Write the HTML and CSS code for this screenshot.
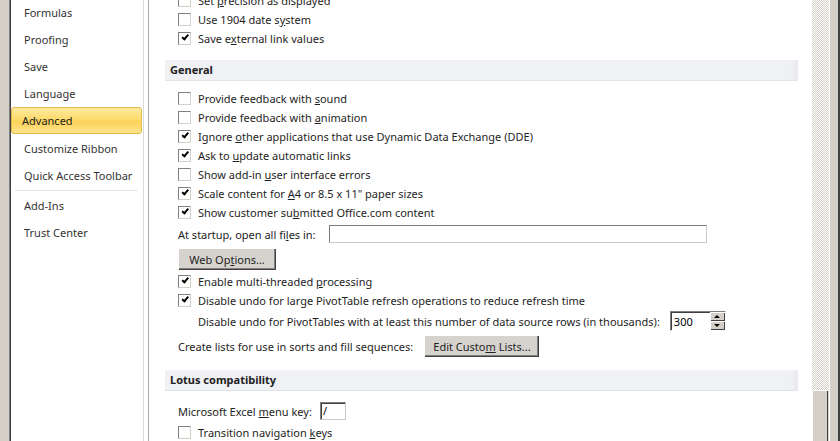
FILE: index.html
```html
<!DOCTYPE html>
<html lang="en">
<head>
    <meta charset="UTF-8">
    <title>Excel Options - Advanced</title>
    <link rel="stylesheet" href="styles.css">
</head>
<body>

<div class="window">
    <div class="frame-left"></div>

    <!-- Category list -->
    <nav class="sidebar">
        <div class="nav-item">Formulas</div>
        <div class="nav-item">Proofing</div>
        <div class="nav-item">Save</div>
        <div class="nav-item">Language</div>
        <div class="nav-item selected">Advanced</div>
        <div class="nav-item">Customize Ribbon</div>
        <div class="nav-item">Quick Access Toolbar</div>
        <div class="nav-sep"></div>
        <div class="nav-item">Add-Ins</div>
        <div class="nav-item">Trust Center</div>
    </nav>

    <div class="gutter"></div>

    <!-- Options pane (scrolled) -->
    <main class="pane">
        <div class="pane-inner">
            <div class="section-body first">
                <div class="row"><span class="cb"></span><span>Set <u>p</u>recision as displayed</span></div>
                <div class="row"><span class="cb"></span><span>Use 1904 date s<u>y</u>stem</span></div>
                <div class="row"><span class="cb on"></span><span>Save e<u>x</u>ternal link values</span></div>
            </div>

            <div class="section-head">General</div>
            <div class="section-body">
                <div class="row"><span class="cb"></span><span>Provide feedback with <u>s</u>ound</span></div>
                <div class="row"><span class="cb"></span><span>Provide feedback with <u>a</u>nimation</span></div>
                <div class="row"><span class="cb on"></span><span>Ignore <u>o</u>ther applications that use Dynamic Data Exchange (DDE)</span></div>
                <div class="row"><span class="cb on"></span><span>Ask to <u>u</u>pdate automatic links</span></div>
                <div class="row"><span class="cb"></span><span>Show add-in <u>u</u>ser interface errors</span></div>
                <div class="row"><span class="cb on"></span><span>Scale content for <u>A</u>4 or 8.5 x 11" paper sizes</span></div>
                <div class="row"><span class="cb on"></span><span>Show customer su<u>b</u>mitted Office.com content</span></div>
                <div class="row field-row">
                    <span>At startup, open all fi<u>l</u>es in:</span>
                    <span class="textbox startup"></span>
                </div>
                <div class="button-row">
                    <button class="btn web">Web Op<u>t</u>ions...</button>
                </div>
                <div class="row gap-top"><span class="cb on"></span><span>Enable multi-threaded <u>p</u>rocessing</span></div>
                <div class="row"><span class="cb on"></span><span>Disable undo for large PivotTable refresh operations to reduce refresh time</span></div>
                <div class="row indent spin-row">
                    <span>Disable undo for PivotTables with at least this number of data source rows (in thousands):</span>
                    <span class="spinner">
                        <span class="spin-value">300</span>
                        <span class="spin-buttons">
                            <span class="spin-btn up"></span>
                            <span class="spin-btn down"></span>
                        </span>
                    </span>
                </div>
                <div class="row lists-row">
                    <span>Create lists for use in sorts and fill sequences:</span>
                    <button class="btn lists">Edit Custo<u>m</u> Lists...</button>
                </div>
            </div>

            <div class="section-head lotus">Lotus compatibility</div>
            <div class="section-body">
                <div class="row key-row">
                    <span>Microsoft Excel <u>m</u>enu key:</span>
                    <span class="keybox">/</span>
                </div>
                <div class="row"><span class="cb"></span><span>Transition navigation <u>k</u>eys</span></div>
            </div>
        </div>
    </main>

    <div class="scrollbar"><div class="thumb"></div></div>
    <div class="frame-right"></div>
</div>

</body>
</html>
```

FILE: styles.css
```css
body {
    margin: 0;
    width: 840px;
    height: 441px;
    overflow: hidden;
    background-color: #d4d0c8;
    font-family: 'Noto Sans', 'Open Sans', sans-serif;
    font-size: 11px;
    color: #1e1e1e;
}

.window {
    display: flex;
    height: 441px;
}

/* window frame */
.frame-left {
    width: 9px;
    background-color: #d4d0c8;
    border-right: 1px solid #808080;
}

.frame-right {
    width: 8px;
    background-color: #d4d0c8;
    border-left: 1px solid #ffffff;
    border-right: 2px solid #404040;
}

/* sidebar */
.sidebar {
    width: 132px;
    background-color: #fff;
    border-left: 1px solid #404040;
    border-right: 1px solid #d9d9d9;
    color: #333;
    font-size: 11px;
}

.nav-item {
    height: 27px;
    line-height: 26px;
    padding-left: 13px;
    white-space: nowrap;
}

.nav-item.selected {
    height: 25px;
    line-height: 25px;
    margin: -1px 1px 2px 0;
    padding-left: 10px;
    border: 1px solid #e3b94c;
    border-radius: 3px;
    background: linear-gradient(#fdeaa0, #fddb6c 45%, #fcd25a 55%, #fde38a);
    color: #1e1e1e;
}

.nav-sep {
    height: 2px;
    margin: 0 5px 0 4px;
    border-top: 1px solid #e4e4e4;
}

.gutter {
    width: 4px;
    background-color: #fff;
    border-right: 1px solid #a8a8a8;
}

/* options pane */
.pane {
    width: 633px;
    padding: 0 14px 0 16px;
    background-color: #fff;
    overflow: hidden;
}

.pane-inner {
    margin-top: -9px;
}

.section-head {
    height: 20px;
    line-height: 20px;
    margin-top: 12px;
    padding-left: 5px;
    background: linear-gradient(to right, #f0f1f5 98.8%, #e8e9ee);
    border-bottom: 1px solid #e1e3e8;
    font-weight: bold;
    color: #222;
}

.section-head.lotus {
    margin-top: 10px;
}

.section-body {
    padding: 8px 0 0 13px;
}

.section-body.first {
    padding-top: 0;
}

.row {
    display: flex;
    align-items: center;
    height: 19px;
    white-space: nowrap;
}

.row.gap-top {
    margin-top: 2px;
}

.row.indent {
    padding-left: 20px;
}

/* checkbox */
.cb {
    width: 11px;
    height: 11px;
    margin-right: 7px;
    border: 1px solid;
    border-color: #808080 #d4d0c8 #d4d0c8 #808080;
    background-color: #fff;
    flex-shrink: 0;
    position: relative;
}

.cb.on::after {
    content: "";
    position: absolute;
    left: 2px;
    top: 1px;
    width: 5px;
    height: 2px;
    border-left: 2px solid #000;
    border-bottom: 2px solid #000;
    transform: rotate(-50deg) translate(0, 1px);
}

/* text fields */
.field-row {
    height: 24px;
}

.textbox {
    display: block;
    height: 16px;
    border: 1px solid;
    border-color: #7b7b7b #c9c9c9 #c9c9c9 #7b7b7b;
    background-color: #fff;
}

.textbox.startup {
    width: 376px;
    margin-left: 13px;
}

.button-row {
    height: 24px;
    padding-top: 2px;
    box-sizing: border-box;
}

.btn {
    height: 22px;
    padding: 0 9px;
    border: none;
    background-color: #d6d3ce;
    box-shadow: inset 1px 1px 0 #fff, inset -1px -1px 0 #404040, inset -2px -2px 0 #808080;
    font-family: inherit;
    font-size: 11px;
    color: #1e1e1e;
}

.btn.web {
    width: 98px;
}

.spin-row {
    height: 22px;
}

.spinner {
    display: flex;
    align-items: center;
    width: 52px;
    height: 16px;
    margin-left: 10px;
    padding: 1px;
    border: 1px solid;
    border-color: #808080 #fff #fff #808080;
    box-shadow: inset 1px 1px 0 #404040;
    background-color: #fff;
}

.spin-value {
    flex: 1;
    padding-left: 2px;
    color: #000;
}

.spin-buttons {
    display: flex;
    flex-direction: column;
    width: 15px;
    height: 18px;
    margin: -1px -1px 0 0;
}

.spin-btn {
    flex: 1;
    background-color: #d4d0c8;
    box-shadow: inset 1px 1px 0 #fff, inset -1px -1px 0 #404040;
    display: flex;
    align-items: center;
    justify-content: center;
}

.spin-btn::after {
    content: "";
    border-left: 3px solid transparent;
    border-right: 3px solid transparent;
}

.spin-btn.up::after {
    border-bottom: 3px solid #000;
}

.spin-btn.down::after {
    border-top: 3px solid #000;
}

.lists-row {
    height: 28px;
}

.btn.lists {
    width: 115px;
    margin-left: 11px;
}

.key-row {
    height: 24px;
}

.keybox {
    display: block;
    width: 22px;
    height: 16px;
    line-height: 16px;
    margin-left: 8px;
    padding-left: 2px;
    border: 1px solid;
    border-color: #808080 #c9c9c9 #c9c9c9 #808080;
    box-shadow: inset 1px 1px 0 #404040;
    background-color: #fff;
    color: #000;
}

/* scrollbar */
.scrollbar {
    width: 17px;
    background: repeating-conic-gradient(#d4d0c8 0 25%, #ffffff 0 50%) 0 0 / 2px 2px;
    display: flex;
    flex-direction: column;
    justify-content: flex-end;
}

.thumb {
    height: 52px;
    margin-bottom: -1px;
    background-color: #d4d0c8;
    box-shadow: inset 1px 1px 0 #fff, inset -1px 0 0 #d4d0c8, inset -2px 0 0 #404040;
}
```
